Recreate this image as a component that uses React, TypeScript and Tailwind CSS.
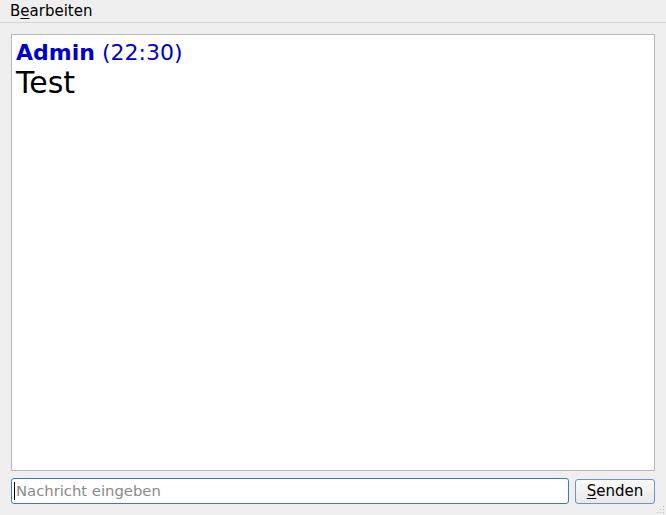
// Chat window: menu bar, message log, input row with send button.

const font = 'font-["DejaVu_Sans",sans-serif]';

const SizeGrip = () => (
  <svg width="10" height="10" viewBox="0 0 10 10" className="absolute bottom-[1px] right-[1px]">
    {[
      [8, 2],
      [5, 5],
      [8, 5],
      [2, 8],
      [5, 8],
      [8, 8],
    ].map(([x, y]) => (
      <rect key={`${x}-${y}`} x={x} y={y} width="1" height="1" fill="#b8b8b8" />
    ))}
  </svg>
);

export default function App() {
  return (
    <div className={`relative flex h-[515px] w-[666px] flex-col bg-[#efefef] ${font} text-[15px] text-black`}>
      {/* menu bar */}
      <div className="flex h-[23px] items-center border-b border-[#d6d6d6] px-[10px] leading-none">
        <span>
          B<span className="underline underline-offset-2">e</span>arbeiten
        </span>
      </div>

      <div className="flex flex-1 flex-col gap-[7px] px-[11px] pt-[11px] pb-[11px]">
        {/* message log */}
        <div className="flex-1 border border-[#b8b8b8] bg-white px-[4px] pt-[4px]">
          <div className="text-[22px] leading-[28px] text-[#0000cc]">
            <span className="font-bold">Admin</span> (22:30)
          </div>
          <div className="text-[30px] leading-[32px]">Test</div>
        </div>

        {/* input row */}
        <div className="flex h-[26px] items-center gap-[6px]">
          <div className="flex h-[26px] flex-1 items-center rounded-[3px] border border-[#3a7bbf] bg-white pl-[2px]">
            <span className="mr-[1px] h-[18px] w-px bg-black" />
            <span className="text-[14.8px] text-[#8a8a8a]">Nachricht eingeben</span>
          </div>
          <button className="flex h-[25px] w-[80px] items-center justify-center rounded-[3px] border border-[#6d95bd] bg-gradient-to-b from-[#f9f9f9] to-[#e9e9e9] leading-none">
            <span>
              <span className="underline underline-offset-2">S</span>enden
            </span>
          </button>
        </div>
      </div>

      <SizeGrip />
    </div>
  );
}
